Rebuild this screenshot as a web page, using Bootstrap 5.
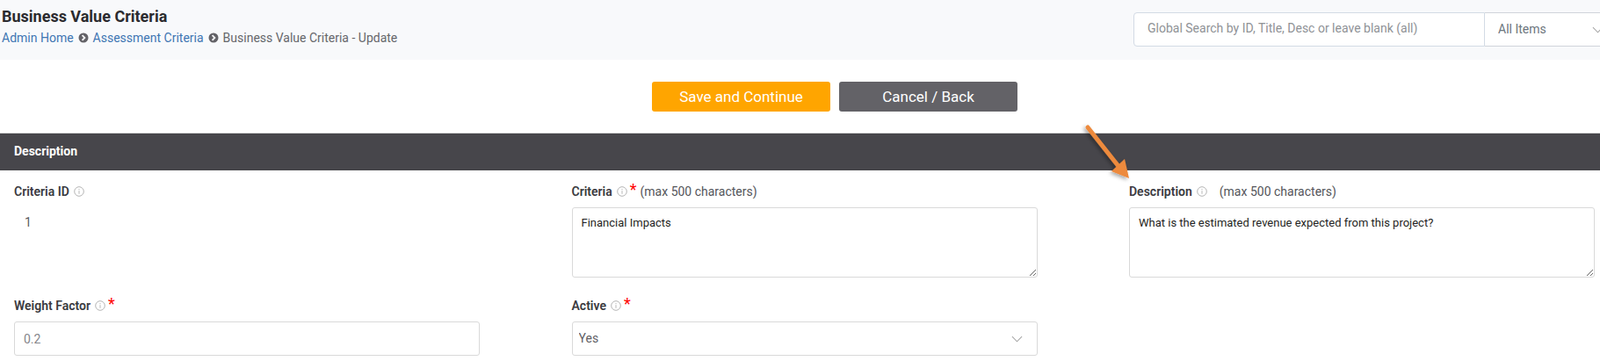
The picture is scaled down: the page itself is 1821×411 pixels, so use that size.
<!DOCTYPE html>
<html lang="en">
<head>
<meta charset="utf-8">
<title>Business Value Criteria</title>
<link href="https://cdn.jsdelivr.net/npm/bootstrap@5.3.0/dist/css/bootstrap.min.css" rel="stylesheet">
<style>
html, body { overflow: hidden; height: 411px; background: #fff; }
body { font-family: Roboto, "Liberation Sans", sans-serif; font-size: 14px; color: #495057; }
.page-shell { width: 1900px; height: 411px; overflow: hidden; position: relative; }
.top-band { height: 68px; background: #f8f9fb; padding-left: 2px; padding-right: 0; }
.title-text { font-size: 18px; font-weight: 700; line-height: 22px; color: #2b2b2f; margin: 8px 0 0; }
.crumbs { font-size: 14px; line-height: 20px; margin-top: 3px; color: #66676b; gap: 5px; }
.crumbs a { color: #3f76b3; text-decoration: none; }
.search-group { margin: 14px 0 0; width: 610px; height: 39px; }
.search-box { width: 400px; height: 39px; font-size: 14px; padding: 0 15px 4px; border: 1px solid #d3dbe5; border-radius: 4px 0 0 4px; color: #495057; }
.search-box::placeholder { color: #8f9296; opacity: 1; }
.chev-select { background-image: url("data:image/svg+xml,%3Csvg xmlns='http://www.w3.org/2000/svg' viewBox='0 0 14 8'%3E%3Cpath d='M1 1l6 6 6-6' fill='none' stroke='%23a5a5a5' stroke-width='1.1'/%3E%3C/svg%3E"); background-size: 13px 8px; }
.search-kind { width: 210px; height: 39px; font-size: 14px; padding: 0 15px; border: 1px solid #d0d4da; border-left: 0; border-radius: 0 4px 4px 0; color: #6c757d; background-position: left 122px center; }
.action-row { height: 84px; padding-top: 25px; gap: 10px; }
.act-btn { width: 203px; height: 34px; padding: 0; font-size: 17px; line-height: 32px; color: #fff; border-radius: 3px; border: 1px solid transparent; }
.act-save { background: #ffa500; }
.act-cancel { background: #636267; }
.act-save:hover { background: #ffa500; color: #fff; }
.act-cancel:hover { background: #636267; color: #fff; }
.section-bar { height: 43px; margin-top: -1px; background: #47464b; border-top: 1px solid #d5d5d5; color: #fff; font-weight: 700; font-size: 14px; padding: 0 16px; line-height: 41px; }
.field-grid { display: grid; grid-template-columns: repeat(3, 530px); grid-template-rows: 130px 67px; column-gap: 104.5px; padding: 14px 16px 0; }
.lbl { font-size: 14px; font-weight: 600; color: #3a3a3f; line-height: 20px; margin: 0 0 8px; display: flex; align-items: center; white-space: nowrap; }
.lbl .hint { font-weight: 400; color: #54555a; }
.hint-wide { margin-left: 14px; }
.info { width: 12px; height: 12px; margin-left: 5px; flex: none; }
.req { color: #f00; font-weight: 400; font-size: 18px; line-height: 14px; margin: -4px 0 0 3px; height: 14px; }
.static-val { padding: 7px 12px; line-height: 20px; color: #5a5a5e; }
.txt-area { width: 530px; height: 80px; border: 1px solid #d9d9d9; border-radius: 3px; font-size: 13px; color: #1f1f22; padding: 7px 10px; line-height: 20px; }
.txt-input, .txt-select { width: 530px; height: 39px; border: 1px solid #d9d9d9; border-radius: 3px; font-size: 14px; color: #85858a; padding: 0 10px; }
.txt-select { padding: 0 8px 0 7px; background-position: right 16px center; color: #5f6065; }
.note-arrow { position: absolute; left: 1225px; top: 135px; width: 80px; height: 85px; pointer-events: none; }
</style>
</head>
<body>
<div class="page-shell">
  <div class="top-band d-flex justify-content-between">
    <div>
      <h1 class="title-text">Business Value Criteria</h1>
      <div class="crumbs d-flex align-items-center">
        <a href="#">Admin Home</a>
        <svg width="12" height="12" viewBox="0 0 12 12"><circle cx="6" cy="6" r="5.5" fill="#636267"/><path d="M4.6 3.2 7.4 6 4.6 8.8" fill="none" stroke="#f8f9fb" stroke-width="1.8"/></svg>
        <a href="#">Assessment Criteria</a>
        <svg width="12" height="12" viewBox="0 0 12 12"><circle cx="6" cy="6" r="5.5" fill="#636267"/><path d="M4.6 3.2 7.4 6 4.6 8.8" fill="none" stroke="#f8f9fb" stroke-width="1.8"/></svg>
        <span>Business Value Criteria - Update</span>
      </div>
    </div>
    <div class="search-group d-flex">
      <input class="form-control search-box" type="text" placeholder="Global Search by ID, Title, Desc or leave blank (all)">
      <select class="form-select chev-select search-kind"><option>All Items</option></select>
    </div>
  </div>

  <div class="action-row d-flex justify-content-center">
    <button type="button" class="btn act-btn act-save">Save and Continue</button>
    <button type="button" class="btn act-btn act-cancel">Cancel / Back</button>
  </div>

  <div class="section-bar">Description</div>

  <div class="field-grid">
    <div>
      <label class="lbl">Criteria ID
        <svg class="info" viewBox="0 0 12 12"><circle cx="6" cy="6" r="5.3" fill="none" stroke="#b5b5b5"/><path d="M6 5.2v3.6M6 3v1.2" stroke="#b5b5b5" stroke-width="1"/></svg>
      </label>
      <div class="static-val">1</div>
    </div>
    <div>
      <label class="lbl">Criteria
        <svg class="info" viewBox="0 0 12 12"><circle cx="6" cy="6" r="5.3" fill="none" stroke="#b5b5b5"/><path d="M6 5.2v3.6M6 3v1.2" stroke="#b5b5b5" stroke-width="1"/></svg>
        <span class="req">*</span><span class="hint ms-1">(max 500 characters)</span>
      </label>
      <textarea class="form-control txt-area">Financial Impacts</textarea>
    </div>
    <div>
      <label class="lbl">Description
        <svg class="info" viewBox="0 0 12 12"><circle cx="6" cy="6" r="5.3" fill="none" stroke="#b5b5b5"/><path d="M6 5.2v3.6M6 3v1.2" stroke="#b5b5b5" stroke-width="1"/></svg>
        <span class="hint hint-wide">(max 500 characters)</span>
      </label>
      <textarea class="form-control txt-area">What is the estimated revenue expected from this project?</textarea>
    </div>
    <div>
      <label class="lbl">Weight Factor
        <svg class="info" viewBox="0 0 12 12"><circle cx="6" cy="6" r="5.3" fill="none" stroke="#b5b5b5"/><path d="M6 5.2v3.6M6 3v1.2" stroke="#b5b5b5" stroke-width="1"/></svg>
        <span class="req">*</span>
      </label>
      <input class="form-control txt-input" type="text" value="0.2">
    </div>
    <div>
      <label class="lbl">Active
        <svg class="info" viewBox="0 0 12 12"><circle cx="6" cy="6" r="5.3" fill="none" stroke="#b5b5b5"/><path d="M6 5.2v3.6M6 3v1.2" stroke="#b5b5b5" stroke-width="1"/></svg>
        <span class="req">*</span>
      </label>
      <select class="form-select chev-select txt-select"><option>Yes</option></select>
    </div>
  </div>

  <svg class="note-arrow" viewBox="1225 135 80 85">
    <defs><filter id="arrowShade" x="-30%" y="-30%" width="160%" height="160%"><feDropShadow dx="-2" dy="2" stdDeviation="2" flood-color="#000" flood-opacity=".35"/></filter></defs>
    <g filter="url(#arrowShade)">
      <path d="M1238 145 1272 188" stroke="#ed8a3c" stroke-width="5" stroke-linecap="round" fill="none"/>
      <path d="M1280 181 1285 203 1265 195Z" fill="#ed8a3c"/>
    </g>
  </svg>
</div>
<script src="https://cdn.jsdelivr.net/npm/bootstrap@5.3.0/dist/js/bootstrap.bundle.min.js"></script>
</body>
</html>
